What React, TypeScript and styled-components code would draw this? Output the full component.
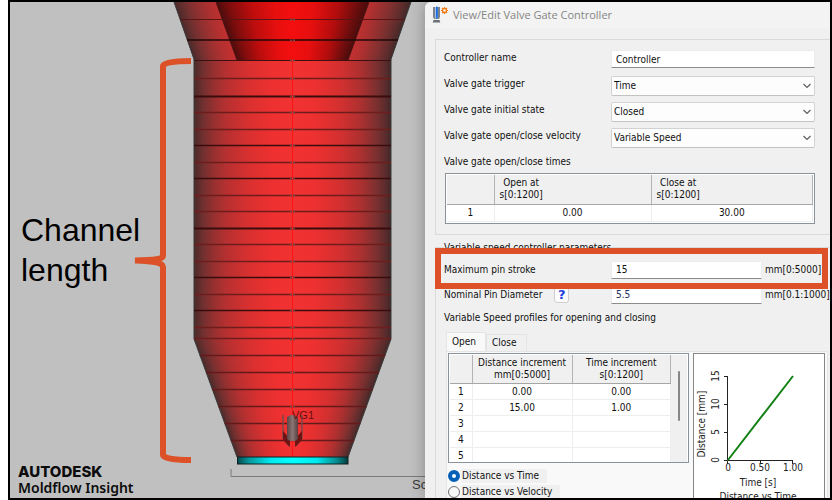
import React, { useState } from "react";
import styled, { createGlobalStyle } from "styled-components";

const GlobalStyle = createGlobalStyle`
  *, *::before, *::after { box-sizing: border-box; }
  body { margin: 0; background: #fff; }
`;

const uiFont = `"DejaVu Sans Condensed", "DejaVu Sans", sans-serif`;
const accent = "#dc5127";

const Frame = styled.main`
  display: flex;
  height: 100vh;
  margin-left: 8px;
  border: 2px solid #000;
  background: #c0c0c0;
  overflow: hidden;
`;

/* ---------- Model viewport ---------- */

const Viewport = styled.section`
  position: relative;
  flex: 415 1 0;
  min-width: 0;
  overflow: hidden;
`;

const ModelDrawing = styled.svg`
  display: block;
  width: 100%;
  height: 100%;
`;

const Callout = styled.p`
  position: absolute;
  left: 11px;
  top: 208px;
  margin: 0;
  width: 140px;
  font: 32px/40px "Liberation Sans", Arial, sans-serif;
  color: #000;
`;

const Brand = styled.div`
  position: absolute;
  left: 8px;
  bottom: 1px;
  color: #0c0c0c;
`;

const BrandName = styled.div`
  font: 800 15px/15px Inter, sans-serif;
`;

const ProductName = styled.div`
  font: 600 14px/18px "Noto Sans", sans-serif;
`;

/* ---------- Dialog ---------- */

const Dialog = styled.section`
  display: flex;
  flex-direction: column;
  flex: 405 1 0;
  min-width: 0;
  background: #f0f0f0;
  border-top-left-radius: 6px;
  box-shadow: 0 0 16px rgba(0, 0, 0, 0.3);
  overflow: hidden;
  z-index: 1;
  font: 10px/16px ${uiFont};
  color: #111;
`;

const TitleBar = styled.header`
  display: flex;
  align-items: center;
  gap: 5px;
  height: 26px;
  flex: none;
  padding-left: 7px;
  background: #f3f3f3;
`;

const Title = styled.h1`
  margin: 0;
  font: 11px/16px "Open Sans", sans-serif;
  color: #858585;
`;

const Form = styled.form`
  margin: 11px 0 0 10px;
`;

const GeneralGroup = styled.div`
  border: 1px solid #dadada;
  border-right: 0;
  padding: 10px 15px 10px 8px;
`;

const Field = styled.div<{ $gap?: number }>`
  display: grid;
  grid-template-columns: 167px minmax(0, 1fr);
  align-items: start;
  margin-top: ${(p) => p.$gap ?? 0}px;
`;

const Label = styled.label`
  white-space: nowrap;
`;

const Caption = styled.div`
  margin-top: 6px;
  white-space: nowrap;
`;

const TextInput = styled.input<{ $ink?: string }>`
  width: 100%;
  height: 18px;
  padding: 0 4px;
  border: 1px solid #ececec;
  border-bottom-color: #8c8c8c;
  border-radius: 1px;
  background: #fff;
  font: inherit;
  color: ${(p) => p.$ink ?? "#111"};
  outline: none;
`;

const SelectWrap = styled.div`
  position: relative;
`;

const Select = styled.select`
  display: block;
  appearance: none;
  width: 100%;
  height: 20px;
  padding: 0 20px 0 2px;
  border: 1px solid #d2d2d2;
  border-bottom-color: #c2c2c2;
  border-radius: 2px;
  background: #fdfdfd;
  font: inherit;
  color: #111;
`;

const SelectArrow = styled.svg`
  position: absolute;
  right: 4px;
  top: 7px;
  width: 8px;
  height: 6px;
  pointer-events: none;
`;

const TimesBox = styled.div`
  margin: 3px 0 0 1px;
  padding: 1px;
  border: 1px solid #8c929a;
  background: #fff;
`;

const Grid = styled.table`
  width: 100%;
  border-collapse: collapse;
  table-layout: fixed;
  font: inherit;
`;

const HeadCell = styled.th<{ $width?: string; $align?: string }>`
  width: ${(p) => p.$width ?? "auto"};
  height: 29px;
  padding: 0 5px;
  border-bottom: 1px solid #a6a6a6;
  border-right: 1px solid #b4b4b4;
  background: #f0f0f0;
  font-weight: normal;
  line-height: 12px;
  text-align: ${(p) => p.$align ?? "center"};
  white-space: nowrap;
`;

const HeadText = styled.span`
  display: inline-block;
  text-align: center;
`;

const Cell = styled.td<{ $height: number }>`
  height: ${(p) => p.$height}px;
  padding: 0;
  border-right: 1px solid #eee;
  border-bottom: 1px solid #eee;
  line-height: 15px;
  text-align: center;
`;

const SpeedGroup = styled.fieldset`
  margin: 5px 0 0;
  min-width: 0;
  border: 1px solid #dadada;
  border-right: 0;
  padding: 5px 2px 0 8px;
`;

const Legend = styled.legend`
  padding: 0;
`;

const MeasureRow = styled.div<{ $gap?: number }>`
  position: relative;
  display: grid;
  grid-template-columns: 167px minmax(0, 1fr) 66px;
  align-items: center;
  height: 18px;
  margin-top: ${(p) => p.$gap ?? 0}px;
`;

const LabelWithHelp = styled.div`
  display: flex;
  align-items: center;
  gap: 12px;
`;

const Unit = styled.span`
  padding-left: 3px;
  white-space: nowrap;
`;

const Highlight = styled.div`
  position: absolute;
  inset: -13px 0 -10px -9px;
  border: 6px solid ${accent};
  pointer-events: none;
  z-index: 2;
`;

const HelpButton = styled.button`
  display: grid;
  place-items: center;
  width: 15px;
  height: 16px;
  padding: 0;
  border: 1px solid #cfcfcf;
  border-radius: 3px;
  background: #fcfcfc;
  font: bold 13px/14px "DejaVu Sans", sans-serif;
  color: #1f3fe0;
`;

const Tabs = styled.div`
  display: flex;
  align-items: flex-end;
  margin: 6px 0 0 2px;
`;

const Tab = styled.button<{ $active: boolean }>`
  height: ${(p) => (p.$active ? 19 : 17)}px;
  padding: 0 9px 0 5px;
  border: 1px solid #e4e4e4;
  border-bottom: 0;
  background: ${(p) => (p.$active ? "#f9f9f9" : "#f0f0f0")};
  font: inherit;
  color: inherit;
`;

const TabPanel = styled.div`
  display: grid;
  grid-template-columns: 241fr 132fr;
  gap: 4px;
  margin-left: 2px;
  padding: 1px 2px 0 1px;
  border: 1px solid #e4e4e4;
  border-bottom: 0;
  background: #f9f9f9;
`;

const ProfileBox = styled.div`
  display: grid;
  grid-template-columns: minmax(0, 1fr) 16px;
  height: 110px;
  padding: 1px;
  border: 1px solid #8c929a;
  background: #fff;
  overflow: hidden;
`;

const ScrollTrack = styled.div`
  display: flex;
  justify-content: center;
  padding-top: 16px;
  background: #f0f0f0;
`;

const ScrollThumb = styled.div`
  width: 2px;
  height: 50px;
  border-radius: 1px;
  background: #868686;
`;

const RadioList = styled.div`
  display: grid;
  justify-items: start;
  margin-top: 5px;
`;

const RadioLabel = styled.label`
  display: flex;
  align-items: center;
  gap: 1px;
  height: 16px;
`;

const RadioText = styled.span`
  padding: 0 8px 0 1px;
  line-height: 14px;
  background: #f0f0f0;
  white-space: nowrap;
`;

const Radio = styled.input`
  appearance: none;
  width: 12px;
  height: 12px;
  margin: 0;
  border: 1px solid #707070;
  border-radius: 50%;
  background: #f7f7f7;
  &:checked {
    border: 4px solid #0560b8;
    background: #fff;
  }
`;

const ChartBox = styled.div`
  height: 160px;
  border: 1px solid #85858a;
  background: #fff;
`;

const ChartDrawing = styled.svg`
  display: block;
  width: 100%;
  font: 10px ${uiFont};
`;

/* ---------- Model ---------- */

type Edge = { y: number; l: number; r: number };

function slices(a: Edge, b: Edge, step = 2) {
  const at = (y: number) => {
    const t = (y - a.y) / (b.y - a.y);
    return { l: a.l + (b.l - a.l) * t, r: a.r + (b.r - a.r) * t };
  };
  const out: string[] = [];
  for (let y = a.y; y < b.y; y += step) {
    const end = Math.min(y + step, b.y);
    const p = at(y);
    const q = at(end);
    out.push(`${p.l},${y} ${p.r},${y} ${q.r},${end} ${q.l},${end}`);
  }
  return out;
}

const bodyRings = [78, 96, 112, 129, 145, 162, 178, 195, 211, 228, 244, 261, 277, 294, 310, 327];
const strongRings = [96, 145, 178, 228, 277, 310];
const taperRings = [355, 372, 389, 406, 423, 440];
const nodes = [19, 40, 60, ...bodyRings, 339, 355, 372, 389, 406];

function Model() {
  return (
    <ModelDrawing viewBox="10 2 415 496" preserveAspectRatio="xMinYMin meet" role="img" aria-label="Nozzle model">
      <defs>
        <linearGradient id="shell">
          <stop offset="0" stopColor="#482a2a" />
          <stop offset="0.05" stopColor="#743030" />
          <stop offset="0.1" stopColor="#963030" />
          <stop offset="0.16" stopColor="#b53030" />
          <stop offset="0.28" stopColor="#da3030" />
          <stop offset="0.4" stopColor="#ee3030" />
          <stop offset="0.5" stopColor="#f23232" />
          <stop offset="0.62" stopColor="#ec3030" />
          <stop offset="0.74" stopColor="#d43030" />
          <stop offset="0.84" stopColor="#b03030" />
          <stop offset="0.92" stopColor="#803030" />
          <stop offset="0.97" stopColor="#5c2c2c" />
          <stop offset="1" stopColor="#402828" />
        </linearGradient>
        <linearGradient id="bore">
          <stop offset="0" stopColor="#4a0c0c" />
          <stop offset="0.08" stopColor="#7c0d0d" />
          <stop offset="0.22" stopColor="#bc0d0d" />
          <stop offset="0.38" stopColor="#e60f0f" />
          <stop offset="0.5" stopColor="#f40e0e" />
          <stop offset="0.64" stopColor="#e60f0f" />
          <stop offset="0.8" stopColor="#b40d0d" />
          <stop offset="0.93" stopColor="#6c0d0d" />
          <stop offset="1" stopColor="#480c0c" />
        </linearGradient>
        <linearGradient id="tip">
          <stop offset="0" stopColor="#034a4d" />
          <stop offset="0.1" stopColor="#06969b" />
          <stop offset="0.3" stopColor="#00e9f0" />
          <stop offset="0.5" stopColor="#00ffff" />
          <stop offset="0.72" stopColor="#00e9f0" />
          <stop offset="0.9" stopColor="#068a8e" />
          <stop offset="1" stopColor="#033a3d" />
        </linearGradient>
        <linearGradient id="pin">
          <stop offset="0" stopColor="#5a4444" />
          <stop offset="0.5" stopColor="#8a7474" />
          <stop offset="1" stopColor="#5a4040" />
        </linearGradient>
      </defs>

      {slices({ y: 2, l: 174, r: 411 }, { y: 60, l: 194, r: 391 }).map((p) => (
        <polygon key={p} points={p} fill="url(#shell)" />
      ))}
      {slices({ y: 2, l: 216, r: 369 }, { y: 60, l: 237, r: 348 }).map((p) => (
        <polygon key={p} points={p} fill="url(#bore)" />
      ))}
      <path d="M216 2L237 60M369 2L348 60" stroke="#4d1414" strokeWidth="1" />
      <rect x="194" y="60" width="197" height="279" fill="url(#shell)" />
      {slices({ y: 339, l: 194, r: 391 }, { y: 457, l: 237, r: 348 }).map((p) => (
        <polygon key={p} points={p} fill="url(#shell)" />
      ))}
      <path d="M174 2L194 59V339L237 457M411 2L391 59V339L348 457" fill="none" stroke="#3a3a3a" strokeWidth="1" />

      <path d="M180 19.5H405" stroke="#5a1414" />
      <path d="M187 40H398" stroke="#200808" strokeWidth="1.5" />
      <path d="M194 60.5H391" stroke="#3c1010" />
      {bodyRings.map((y) => (
        <path
          key={y}
          d={`M194 ${y + 0.5}H391`}
          stroke={strongRings.includes(y) ? "#3a0c0c" : "#6e1c1c"}
          strokeWidth={y === 96 || y === 228 ? 2 : 1.3}
        />
      ))}
      <path d="M194 338.5H391" stroke="#6e1c1c" strokeWidth="1.3" />
      {taperRings.map((y) => {
        const inset = ((y - 339) / 118) * 43;
        return <path key={y} d={`M${194 + inset} ${y + 0.5}H${391 - inset}`} stroke="#641a1a" strokeWidth="1.3" />;
      })}
      <path d="M292.5 60V457" stroke="#ff1414" />
      {nodes.map((y) => (
        <path key={y} d={`M290 ${y + 0.5}H295`} stroke="#7a4444" strokeWidth="2" strokeDasharray="2 1" />
      ))}

      <rect x="237.5" y="457" width="110.500" height="7" fill="url(#tip)" stroke="#102020" />

      <path d="M283 415V438L289 446M302 415V438L296 446" fill="none" stroke="#7d4848" strokeWidth="1.500" />
      <path d="M283 431L290 439V447L283 440ZM302 431L295 439V447L302 440Z" fill="#6e1414" />
      <path d="M287 418a5.500 3 0 0 1 11 0V439l-3 2h-5l-3-2Z" fill="url(#pin)" />
      <text x="292" y="419" fontFamily="Liberation Sans" fontSize="11" fill="#6b0f0f">
        VG1
      </text>

      <path d="M231 469V476.5H425" fill="none" stroke="#7b7b7b" />
      <text x="412" y="489" fontFamily="Liberation Sans" fontSize="13" fill="#3a3a3a">
        Sc
      </text>

      <path
        d="M191 61C173 61 163 63 163 66V256C163 259 155 260 135 260.500C155 261 163 263 163 267V455C163 458 173 460 191 460"
        fill="none"
        stroke={accent}
        strokeWidth="6"
      />
    </ModelDrawing>
  );
}

/* ---------- Dialog parts ---------- */

function ControllerIcon() {
  return (
    <svg width="16" height="18" viewBox="0 0 16 18" aria-hidden="true">
      <path d="M1 1h2v10l1 2H2l-1-2Z" fill="#7b8289" />
      <path d="M6 1h2v10l-1 2H5l1-2Z" fill="#7b8289" />
      <path d="M4 1h1.500v10l-.8 2L4 11Z" fill="#1e6fe0" stroke="#1e6fe0" strokeWidth=".8" />
      <path d="M1.500 14h6l.8 2.500H.7Z" fill="#6a7178" />
      <circle cx="12.500" cy="4.500" r="2" fill="none" stroke="#ee7a12" strokeWidth="1.300" />
      <path
        d="M12.500 1v1.500M12.500 6.500V8M9 4.500h1.500M14.500 4.500H16M10 2l1 1M14 6l1 1M15 2l-1 1M11 6l-1 1"
        stroke="#ee7a12"
        strokeWidth="1.200"
      />
    </svg>
  );
}

function Dropdown({ id, value }: { id: string; value: string }) {
  return (
    <SelectWrap>
      <Select id={id} defaultValue={value}>
        <option>{value}</option>
      </Select>
      <SelectArrow viewBox="0 0 8 6" aria-hidden="true">
        <path d="M0.500 1L4 4.500L7.500 1" fill="none" stroke="#5e5e5e" strokeWidth="1.200" />
      </SelectArrow>
    </SelectWrap>
  );
}

function ProfileChart({ title }: { title: string }) {
  return (
    <ChartBox>
      <ChartDrawing viewBox="694 353 130 158" role="img" aria-label={title}>
        <path d="M727.500 375V459.500H793" fill="none" stroke="#222" />
        <path d="M724 375.500h3M724 403.500h3M724 431.500h3M724 459.500h3M727.500 460v3M760.500 460v3M792.500 460v3" stroke="#222" />
        <path d="M728 459L793 375" stroke="#128012" strokeWidth="2" />
        <g fill="#222" textAnchor="middle">
          <text transform="translate(719 459) rotate(-90)">0</text>
          <text transform="translate(719 431) rotate(-90)">5</text>
          <text transform="translate(719 403) rotate(-90)">10</text>
          <text transform="translate(719 375) rotate(-90)">15</text>
          <text x="728" y="470">0</text>
          <text x="760" y="470">0.50</text>
          <text x="793" y="470">1.00</text>
          <text transform="translate(705 423) rotate(-90)">Distance [mm]</text>
          <text x="758" y="485">Time [s]</text>
          <text x="758" y="499">{title}</text>
        </g>
      </ChartDrawing>
    </ChartBox>
  );
}

const profileRows = [
  ["0.00", "0.00"],
  ["15.00", "1.00"],
  ["", ""],
  ["", ""],
  ["", ""],
];

export default function App() {
  const [tab, setTab] = useState("Open");
  const [mode, setMode] = useState("Distance vs Time");

  return (
    <>
      <GlobalStyle />
      <Frame>
        <Viewport>
          <Model />
          <Callout>Channel length</Callout>
          <Brand>
            <BrandName>AUTODESK</BrandName>
            <ProductName>Moldflow Insight</ProductName>
          </Brand>
        </Viewport>

        <Dialog>
          <TitleBar>
            <ControllerIcon />
            <Title>View/Edit Valve Gate Controller</Title>
          </TitleBar>
          <Form onSubmit={(e) => e.preventDefault()}>
            <GeneralGroup>
              <Field>
                <Label htmlFor="name">Controller name</Label>
                <TextInput id="name" defaultValue="Controller" />
              </Field>
              <Field $gap={8}>
                <Label htmlFor="trigger">Valve gate trigger</Label>
                <Dropdown id="trigger" value="Time" />
              </Field>
              <Field $gap={6}>
                <Label htmlFor="state">Valve gate initial state</Label>
                <Dropdown id="state" value="Closed" />
              </Field>
              <Field $gap={6}>
                <Label htmlFor="velocity">Valve gate open/close velocity</Label>
                <Dropdown id="velocity" value="Variable Speed" />
              </Field>
              <Caption>Valve gate open/close times</Caption>
              <TimesBox>
                <Grid>
                  <thead>
                    <tr>
                      <HeadCell $width="47px" />
                      <HeadCell $width="157px" $align="left">
                        <HeadText>Open at<br />s[0:1200]</HeadText>
                      </HeadCell>
                      <HeadCell $align="left">
                        <HeadText>Close at<br />s[0:1200]</HeadText>
                      </HeadCell>
                    </tr>
                  </thead>
                  <tbody>
                    <tr>
                      <Cell $height={17}>1</Cell>
                      <Cell $height={17}>0.00</Cell>
                      <Cell $height={17}>30.00</Cell>
                    </tr>
                  </tbody>
                </Grid>
              </TimesBox>
            </GeneralGroup>

            <SpeedGroup>
              <Legend>Variable speed controller parameters</Legend>
              <MeasureRow>
                <Label htmlFor="stroke">Maximum pin stroke</Label>
                <TextInput id="stroke" defaultValue="15" />
                <Unit>mm[0:5000]</Unit>
                <Highlight />
              </MeasureRow>
              <MeasureRow $gap={7}>
                <LabelWithHelp>
                  <Label htmlFor="diameter">Nominal Pin Diameter</Label>
                  <HelpButton type="button" aria-label="Help">?</HelpButton>
                </LabelWithHelp>
                <TextInput id="diameter" defaultValue="5.5" $ink="#27305e" />
                <Unit>mm[0.1:1000]</Unit>
              </MeasureRow>
              <Caption>Variable Speed profiles for opening and closing</Caption>
              <Tabs role="tablist">
                {["Open", "Close"].map((name) => (
                  <Tab
                    key={name}
                    type="button"
                    role="tab"
                    aria-selected={tab === name}
                    $active={tab === name}
                    onClick={() => setTab(name)}
                  >
                    {name}
                  </Tab>
                ))}
              </Tabs>
              <TabPanel role="tabpanel">
                <div>
                  <ProfileBox>
                    <Grid>
                      <thead>
                        <tr>
                          <HeadCell $width="22px" />
                          <HeadCell $width="100px">Distance increment<br />mm[0:5000]</HeadCell>
                          <HeadCell>Time increment<br />s[0:1200]</HeadCell>
                        </tr>
                      </thead>
                      <tbody>
                        {profileRows.map(([distance, time], i) => (
                          <tr key={i}>
                            <Cell $height={16}>{i + 1}</Cell>
                            <Cell $height={16}>{distance}</Cell>
                            <Cell $height={16}>{time}</Cell>
                          </tr>
                        ))}
                      </tbody>
                    </Grid>
                    <ScrollTrack>
                      <ScrollThumb />
                    </ScrollTrack>
                  </ProfileBox>
                  <RadioList>
                    {["Distance vs Time", "Distance vs Velocity"].map((name) => (
                      <RadioLabel key={name}>
                        <Radio type="radio" name="mode" checked={mode === name} onChange={() => setMode(name)} />
                        <RadioText>{name}</RadioText>
                      </RadioLabel>
                    ))}
                  </RadioList>
                </div>
                <ProfileChart title={mode} />
              </TabPanel>
            </SpeedGroup>
          </Form>
        </Dialog>
      </Frame>
    </>
  );
}
